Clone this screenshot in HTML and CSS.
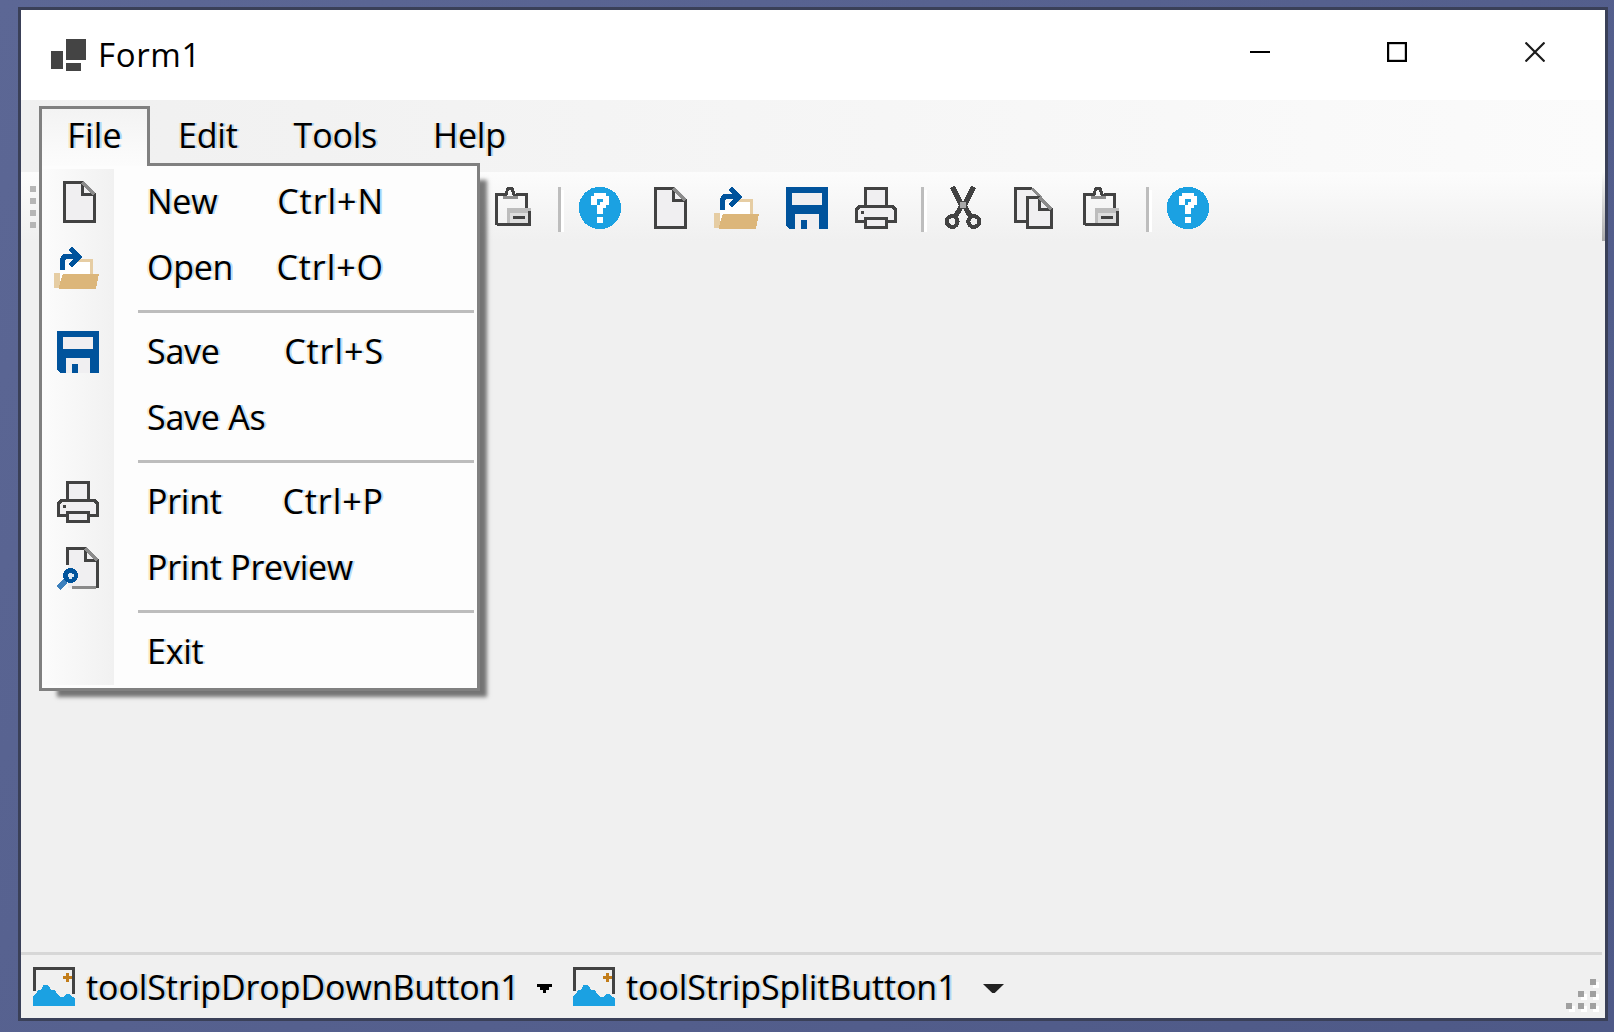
FILE: index.html
```html
<!DOCTYPE html>
<html lang="en">
<head>
<meta charset="utf-8">
<title>Form1</title>
<link rel="stylesheet" href="styles.css">
</head>
<body>
<svg class="defs" width="0" height="0" aria-hidden="true">
  <symbol id="i-new" viewBox="0 0 16 16"><path class="paper" d="M3.5 1.5H10.5L13.5 4.5V14.5H3.5Z"/><path class="ink" d="M3.5 1.5H9.5V5.5H13.5V14.5H3.5Z"/><path class="ink-soft" d="M9.5 1.5L13.5 5.5"/></symbol>
  <symbol id="i-open" viewBox="0 0 16 16"><path fill="#ffffff" d="M2 6H12V10H3L2 14Z"/><path class="tan-back" d="M8 5.5H12.5V10"/><path class="tan-side" d="M1 9.5V14.5"/><path fill="#dcb67a" d="M3 10H15L14 15H1.5L2 13Z"/><path class="arrow" d="M2.7 8.5V5.2L3.5 4.3H8.4"/><path class="arrow" d="M5.4 1.4L8.4 4.3L5.4 7.2"/></symbol>
  <symbol id="i-save" viewBox="0 0 16 16"><path fill="#00539c" d="M1 1H15V15H2L1 14Z"/><rect class="blank" x="3" y="3" width="10" height="4"/><rect class="blank" x="4" y="10" width="8" height="5"/><rect fill="#00539c" x="6" y="12" width="2" height="3"/></symbol>
  <symbol id="i-print" viewBox="0 0 16 16"><rect class="paper ink-box" x="4.5" y="1.5" width="7" height="6"/><path class="paper ink" d="M2.5 7.5H13.5L14.5 8.5V12.5H1.5V8.5Z"/><rect class="paper ink-box" x="4.5" y="11.5" width="7" height="3"/><rect fill="#424242" x="3" y="9" width="1" height="1"/></symbol>
  <symbol id="i-preview" viewBox="0 0 16 16"><path class="paper" d="M4.5 1.5H11L14.5 5V14.5H4.5Z"/><path class="ink" d="M4.5 7V1.5H10.5V5.5H14.5V14.5"/><path class="ink-soft" d="M10.5 1.5L14.5 5.5"/><path stroke="#8a8a8a" fill="none" d="M6 14.5H14"/><circle cx="5.5" cy="10.5" r="2.5" fill="#00539c"/><path fill="#dce8f4" d="M5 9.5H6V10H6.5V11H6V11.5H5V11H4.5V10H5Z"/><path stroke="#3c80bd" stroke-width="1.8" fill="none" d="M3.8 12.4L1.5 14.6"/></symbol>
  <symbol id="i-cut" viewBox="0 0 16 16"><path class="blade" d="M4.5 1L7.6 7.2L5.6 10.6M11.5 1L8.4 7.2L10.4 10.6"/><rect fill="#a8a8a8" x="7" y="6" width="2" height="2"/><circle class="ring" cx="4.4" cy="12.5" r="1.8"/><circle class="ring" cx="11.6" cy="12.5" r="1.8"/></symbol>
  <symbol id="i-copy" viewBox="0 0 16 16"><path class="paper" d="M2.5 1.5H8L10 3.5V12.5H2.5Z"/><path class="ink" d="M6.5 12.5H2.5V1.5H8"/><path class="ink-soft" d="M8 1.5L11 4.5"/><path class="paper" d="M6.5 4.5H11L14.5 8V14.5H6.5Z"/><path class="ink" d="M6.5 4.5H10.5V8.5H14.5V14.5H6.5Z"/><path class="ink-soft" d="M10.5 4.5L14.5 8.5"/></symbol>
  <symbol id="i-paste" viewBox="0 0 16 16"><path class="ink" d="M2.5 13.5V3.5H5.5M9 3.5H12.5V8"/><path class="ink" d="M5.5 4L6.3 1.5H7.7L8.5 4"/><path stroke="#8f8f8f" fill="none" d="M4.5 4.5H9.5"/><rect fill="#bdbdbd" x="6" y="8" width="8" height="6"/><rect fill="#dedede" x="7" y="9.5" width="6" height="3.5"/><rect fill="#424242" x="8" y="10.5" width="4" height="1"/><path class="ink" d="M2.5 13.5H13.5V9"/></symbol>
  <symbol id="i-help" viewBox="0 0 16 16"><circle cx="8" cy="8" r="7.1" fill="#1ba1e2"/><path fill="#ffffff" d="M6 3H10V4H11V7H10V8H9V10H7V7H8V6H9V5H7V7H5V4H6Z"/><rect fill="#ffffff" x="7" y="11" width="2" height="2"/></symbol>
  <symbol id="i-image" viewBox="0 0 16 16"><path class="ink" d="M1.5 9V1.5H14.5V10"/><path fill="#1ba1e2" d="M1 11L3 8.5H3.8L4.5 7H6L7 8.5H8L10 11H11L12 10H13L15 11.5V14H1Z"/><path fill="#c27d1a" d="M11 4H12V3H13V4H14V5H13V6H12V5H11Z"/></symbol>
</svg>

<main class="window">
  <header class="titlebar">
    <svg class="app-icon" viewBox="0 0 38 36" aria-hidden="true"><rect x="17" y="2" width="20" height="21"/><rect x="2" y="14" width="12" height="18"/><rect x="17" y="26" width="15" height="8"/></svg>
    <span class="title-text txt">Form1</span>
    <div class="caption">
      <span class="cap-btn"><svg viewBox="0 0 20 20" aria-hidden="true"><rect y="9" width="20" height="2"/></svg></span>
      <span class="cap-btn"><svg viewBox="0 0 20 20" aria-hidden="true"><rect class="cap-box" x="1" y="1" width="18" height="18"/></svg></span>
      <span class="cap-btn"><svg viewBox="0 0 20 20" aria-hidden="true"><path class="cap-x" d="M.5 .5L19.5 19.5M19.5 .5L.5 19.5"/></svg></span>
    </div>
  </header>

  <nav class="menubar">
    <span class="menu-item is-open txt">File</span>
    <span class="menu-item txt">Edit</span>
    <span class="menu-item txt">Tools</span>
    <span class="menu-item txt">Help</span>
  </nav>

  <div class="toolbar">
    <span class="grip"><i></i><i></i><i></i><i></i></span>
    <span class="tool"><svg class="ico"><use href="#i-new"/></svg></span>
    <span class="tool"><svg class="ico"><use href="#i-open"/></svg></span>
    <span class="tool"><svg class="ico"><use href="#i-save"/></svg></span>
    <span class="tool"><svg class="ico"><use href="#i-print"/></svg></span>
    <span class="tool-sep"></span>
    <span class="tool"><svg class="ico"><use href="#i-cut"/></svg></span>
    <span class="tool"><svg class="ico"><use href="#i-copy"/></svg></span>
    <span class="tool"><svg class="ico"><use href="#i-paste"/></svg></span>
    <span class="tool-sep"></span>
    <span class="tool"><svg class="ico"><use href="#i-help"/></svg></span>
    <span class="tool"><svg class="ico"><use href="#i-new"/></svg></span>
    <span class="tool"><svg class="ico"><use href="#i-open"/></svg></span>
    <span class="tool"><svg class="ico"><use href="#i-save"/></svg></span>
    <span class="tool"><svg class="ico"><use href="#i-print"/></svg></span>
    <span class="tool-sep"></span>
    <span class="tool"><svg class="ico"><use href="#i-cut"/></svg></span>
    <span class="tool"><svg class="ico"><use href="#i-copy"/></svg></span>
    <span class="tool"><svg class="ico"><use href="#i-paste"/></svg></span>
    <span class="tool-sep"></span>
    <span class="tool"><svg class="ico"><use href="#i-help"/></svg></span>
    <span class="toolbar-end"></span>
  </div>

  <div class="content"></div>

  <footer class="statusbar">
    <svg class="ico status-ico"><use href="#i-image"/></svg>
    <span class="status-label drop txt">toolStripDropDownButton1</span>
    <svg class="arrow-small" viewBox="0 0 5 3" aria-hidden="true"><path d="M0 0H5V1H4V2H3V3H2V2H1V1H0Z"/></svg>
    <svg class="ico status-ico second"><use href="#i-image"/></svg>
    <span class="status-label split txt">toolStripSplitButton1</span>
    <svg class="arrow-big" viewBox="0 0 7 3" aria-hidden="true"><path d="M0 0H7L3.5 3.4Z"/></svg>
    <svg class="size-grip" viewBox="0 0 33 33" aria-hidden="true">
      <g fill="#ffffff"><rect x="27" y="3" width="6" height="6"/><rect x="15" y="15" width="6" height="6"/><rect x="27" y="15" width="6" height="6"/><rect x="3" y="27" width="6" height="6"/><rect x="15" y="27" width="6" height="6"/><rect x="27" y="27" width="6" height="6"/></g>
      <g fill="#a0a0a0"><rect x="24" y="0" width="6" height="6"/><rect x="12" y="12" width="6" height="6"/><rect x="24" y="12" width="6" height="6"/><rect x="0" y="24" width="6" height="6"/><rect x="12" y="24" width="6" height="6"/><rect x="24" y="24" width="6" height="6"/></g>
    </svg>
  </footer>

  <div class="dropdown">
    <div class="row"><svg class="ico"><use href="#i-new"/></svg><span class="label txt">New</span><span class="key txt">Ctrl+N</span></div>
    <div class="row"><svg class="ico"><use href="#i-open"/></svg><span class="label txt">Open</span><span class="key txt">Ctrl+O</span></div>
    <div class="sep"></div>
    <div class="row"><svg class="ico"><use href="#i-save"/></svg><span class="label txt">Save</span><span class="key txt">Ctrl+S</span></div>
    <div class="row"><span class="no-ico"></span><span class="label txt">Save As</span></div>
    <div class="sep"></div>
    <div class="row"><svg class="ico"><use href="#i-print"/></svg><span class="label txt">Print</span><span class="key txt">Ctrl+P</span></div>
    <div class="row"><svg class="ico"><use href="#i-preview"/></svg><span class="label txt">Print Preview</span></div>
    <div class="sep"></div>
    <div class="row"><span class="no-ico"></span><span class="label txt">Exit</span></div>
  </div>
</main>
</body>
</html>
```

FILE: styles.css
```css
* { box-sizing: border-box; }

html, body { margin: 0; height: 100%; }

body {
  padding: 7px 6px 11px 18px;
  background: linear-gradient(135deg, #5c6795, #4e5987);
  overflow: hidden;
  font-family: "Open Sans", "Noto Sans", sans-serif;
  color: #000;
}

.defs { position: absolute; }

.txt {
  font-size: 34px;
  line-height: 46px;
  white-space: nowrap;
  text-shadow: -2px 0 rgba(255, 190, 90, .32), 2px 0 rgba(70, 170, 255, .4);
}

.window {
  position: relative;
  display: flex;
  flex-direction: column;
  height: 100%;
  border: 3px solid #3a4058;
  background: #f0f0f0;
}

/* Title bar */
.titlebar {
  flex: 0 0 90px;
  display: flex;
  align-items: center;
  padding-left: 28px;
  background: #fff;
}

.app-icon { width: 38px; height: 36px; margin: -1px 11px 0 0; fill: #444; filter: blur(.5px); }

.title-text {
  font-size: 33px;
  letter-spacing: .65px;
  text-shadow: none;
  margin-top: 0;
}

.caption { display: flex; margin-left: auto; margin-right: 1.5px; margin-top: -6px; }

.cap-btn {
  width: 137.6px;
  display: flex;
  justify-content: center;
}

.cap-btn svg { width: 20px; height: 20px; display: block; }
.cap-box { fill: none; stroke: #000; stroke-width: 2.4; }
.cap-x { fill: none; stroke: #1c1c1c; stroke-width: 2.2; }

/* Menu bar */
.menubar {
  flex: 0 0 72px;
  display: flex;
  align-items: flex-start;
  padding: 6px 0 0 18px;
  background: linear-gradient(to right, #f0f0f0, #fbfbfb);
}

.menu-item {
  padding: 6px 28px;
  height: 60px;
  letter-spacing: -.2px;
}

.menu-item.is-open {
  position: relative;
  z-index: 3;
  width: 111px;
  border: 3px solid #808080;
  border-bottom: 0;
  padding: 3px 0;
  text-align: center;
  letter-spacing: .2px;
  background: linear-gradient(to bottom, #f3f3f3, #fcfcfc);
}

/* Tool bar */
.toolbar {
  flex: 0 0 69px;
  display: flex;
  align-items: flex-start;
  padding: 12px 0 0 9px;
  background: linear-gradient(to bottom, #fcfcfc, #f0f0f0);
}

.grip {
  width: 6px;
  margin-right: 21px;
  margin-top: 2px;
  display: flex;
  flex-direction: column;
  gap: 6px;
}

.grip i { width: 6px; height: 6px; background: #b6b6b6; }

.tool { flex: 0 0 69px; height: 48px; }

.tool-sep {
  flex: 0 0 18px;
  width: 18px;
  height: 48px;
  background:
    linear-gradient(#bdbdbd, #bdbdbd) 0 3px / 3px 45px no-repeat,
    linear-gradient(#ffffff, #ffffff) 3px 6px / 3px 45px no-repeat;
}

.toolbar-end {
  align-self: stretch;
  width: 3px;
  margin: -12px 0 0 auto;
  background: linear-gradient(to bottom, #fbfbfb, #ababab);
}

.ico { width: 48px; height: 48px; display: block; flex: none; shape-rendering: crispEdges; }

.paper { fill: #f0eff1; }
.blank { fill: #f0eff1; }
.ink { fill: none; stroke: #424242; }
.ink-box { stroke: #424242; }
.paper.ink { fill: #f0eff1; }
.ink-soft { fill: none; stroke: #8b8b8b; }
.tan-back { fill: none; stroke: #e6cda3; }
.tan-side { fill: none; stroke: #e6cda3; stroke-width: 2; }
.arrow { fill: none; stroke: #00539c; stroke-width: 1.7; }
.blade { fill: none; stroke: #424242; stroke-width: 1.7; }
.ring { fill: #f0f0f0; stroke: #424242; stroke-width: 1.4; }

/* Client area */
.content { flex: 1; }

/* Status strip */
.statusbar {
  position: relative;
  flex: 0 0 66px;
  display: flex;
  align-items: center;
  padding-left: 9px;
  background: #f0f0f0;
}

.statusbar::before {
  content: "";
  position: absolute;
  left: 0;
  right: 3px;
  top: 0;
  height: 3px;
  background: #d7d7d7;
}

.status-ico { margin-top: 6px; }
.status-ico.second { margin-left: 18px; }

.status-label { margin-top: 3px; letter-spacing: -.08px; }
.status-label.drop { margin-left: 8px; width: 432px; }
.status-label.split { margin-left: 8px; width: 331px; }

.arrow-small { width: 15px; height: 9px; margin: 6px 0 0 19px; fill: #000; }
.arrow-big { width: 21px; height: 9px; margin: 6px 0 0 26px; fill: #222; }

.size-grip { position: absolute; right: 6px; bottom: 6px; width: 33px; height: 33px; }

/* Open File menu */
.dropdown {
  position: absolute;
  z-index: 2;
  left: 18px;
  top: 153px;
  width: 441px;
  height: 528px;
  padding: 3px 3px 3px 0;
  border: 3px solid #808080;
  background:
    linear-gradient(to right, #fcfcfc, #f1f1f1) 0 3px / 72px 516px no-repeat,
    #fdfdfd;
  box-shadow: 12.5px 11.5px 4px -5.5px rgba(0, 0, 0, .52);
}

.row {
  height: 66px;
  display: grid;
  grid-template-columns: 48px 105px;
  align-items: center;
  padding-left: 12px;
  position: relative;
}

.row .label { grid-column: 2; margin: -3px 0 0 45px; letter-spacing: -.25px; }
.no-ico { width: 48px; }

.key {
  position: absolute;
  right: 90px;
  margin-top: -3px;
  letter-spacing: .95px;
}

.sep {
  height: 18px;
  margin-left: 96px;
  background: linear-gradient(#bdbdbd, #bdbdbd) 0 9px / 100% 3px no-repeat;
}
```
